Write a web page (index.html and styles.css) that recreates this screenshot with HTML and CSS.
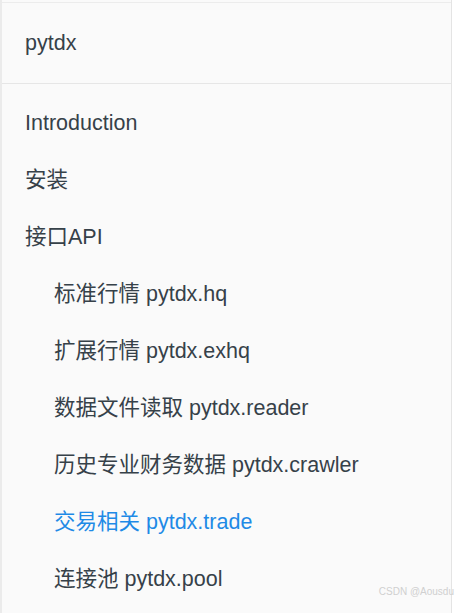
FILE: index.html
```html
<!DOCTYPE html>
<html lang="zh-CN">
<head>
    <meta charset="UTF-8">
    <meta name="viewport" content="width=device-width, initial-scale=1.0">
    <title>pytdx</title>
    <link rel="stylesheet" href="styles.css">
</head>
<body>

<div class="book-summary">
    <div class="summary-header">pytdx</div>
    <ul class="summary">
        <li><a href="#">Introduction</a></li>
        <li><a href="#">安装</a></li>
        <li><a href="#">接口API</a>
            <ul class="articles">
                <li><a href="#">标准行情 pytdx.hq</a></li>
                <li><a href="#">扩展行情 pytdx.exhq</a></li>
                <li><a href="#">数据文件读取 pytdx.reader</a></li>
                <li><a href="#">历史专业财务数据 pytdx.crawler</a></li>
                <li class="active"><a href="#">交易相关 pytdx.trade</a></li>
                <li><a href="#">连接池 pytdx.pool</a></li>
            </ul>
        </li>
    </ul>
</div>

<div class="watermark">CSDN @Aousdu</div>

</body>
</html>
```

FILE: styles.css
```css
html, body {
    height: 100%;
}
body {
    margin: 0;
    background: #fff;
    font-family: "Liberation Sans", Arial, "Noto Sans CJK SC", sans-serif;
    color: #364149;
    overflow: hidden;
}
.book-summary {
    width: 452px;
    height: 100%;
    box-sizing: border-box;
    background: #fafafa;
    border-left: 2px solid #ebebeb;
    border-right: 1px solid #e4e4e4;
    padding-top: 2px;
}
.summary-header {
    height: 80px;
    line-height: 80px;
    padding: 0 23px;
    font-size: 21.5px;
    border-top: 1px solid #ececec;
    border-bottom: 1px solid #e6e6e6;
}
.summary, .articles {
    list-style: none;
    margin: 0;
    padding: 0;
}
.summary {
    padding: 11px 0 10px;
}
.summary a {
    display: block;
    padding: 16px 23px;
    line-height: 25px;
    font-size: 21.5px;
    color: #364149;
    text-decoration: none;
}
.articles a {
    padding-left: 52px;
}
.summary li.active > a {
    color: #1f8ae6;
}
.watermark {
    position: absolute;
    right: 1px;
    bottom: 16px;
    font-size: 10px;
    color: #d0d0d0;
}
```
